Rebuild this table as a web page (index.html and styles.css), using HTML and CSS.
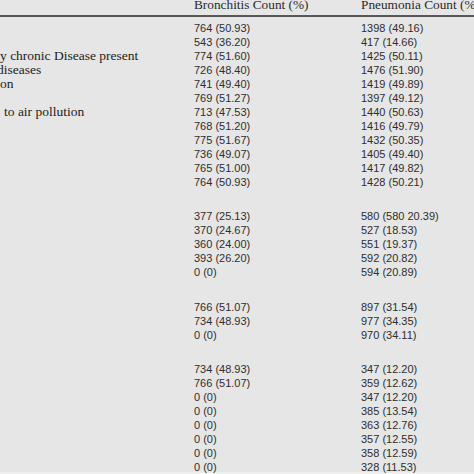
FILE: index.html
```html
<!DOCTYPE html>
<html>
<head>
<meta charset="utf-8">
<link rel="stylesheet" href="styles.css">
</head>
<body>
<div class="sheet">
  <div class="head">
    <div class="cell label"></div>
    <div class="cell col">Bronchitis Count (%)</div>
    <div class="cell col">Pneumonia Count (%)</div>
  </div>
  <div class="body">
    <div class="group g1">
      <div class="row"><div class="label"></div><div class="col">764 (50.93)</div><div class="col">1398 (49.16)</div></div>
      <div class="row"><div class="label"></div><div class="col">543 (36.20)</div><div class="col">417 (14.66)</div></div>
      <div class="row"><div class="label"><span class="lbl">y chronic Disease present</span></div><div class="col">774 (51.60)</div><div class="col">1425 (50.11)</div></div>
      <div class="row"><div class="label"><span class="lbl cut-d">diseases</span></div><div class="col">726 (48.40)</div><div class="col">1476 (51.90)</div></div>
      <div class="row"><div class="label"><span class="lbl">on</span></div><div class="col">741 (49.40)</div><div class="col">1419 (49.89)</div></div>
      <div class="row"><div class="label"></div><div class="col">769 (51.27)</div><div class="col">1397 (49.12)</div></div>
      <div class="row"><div class="label"><span class="lbl ind">to air pollution</span></div><div class="col">713 (47.53)</div><div class="col">1440 (50.63)</div></div>
      <div class="row"><div class="label"></div><div class="col">768 (51.20)</div><div class="col">1416 (49.79)</div></div>
      <div class="row"><div class="label"></div><div class="col">775 (51.67)</div><div class="col">1432 (50.35)</div></div>
      <div class="row"><div class="label"></div><div class="col">736 (49.07)</div><div class="col">1405 (49.40)</div></div>
      <div class="row"><div class="label"></div><div class="col">765 (51.00)</div><div class="col">1417 (49.82)</div></div>
      <div class="row"><div class="label"></div><div class="col">764 (50.93)</div><div class="col">1428 (50.21)</div></div>
    </div>
    <div class="group g2">
      <div class="row"><div class="label"></div><div class="col">377 (25.13)</div><div class="col">580 (580 20.39)</div></div>
      <div class="row"><div class="label"></div><div class="col">370 (24.67)</div><div class="col">527 (18.53)</div></div>
      <div class="row"><div class="label"></div><div class="col">360 (24.00)</div><div class="col">551 (19.37)</div></div>
      <div class="row"><div class="label"></div><div class="col">393 (26.20)</div><div class="col">592 (20.82)</div></div>
      <div class="row"><div class="label"></div><div class="col">0 (0)</div><div class="col">594 (20.89)</div></div>
    </div>
    <div class="group g3">
      <div class="row"><div class="label"></div><div class="col">766 (51.07)</div><div class="col">897 (31.54)</div></div>
      <div class="row"><div class="label"></div><div class="col">734 (48.93)</div><div class="col">977 (34.35)</div></div>
      <div class="row"><div class="label"></div><div class="col">0 (0)</div><div class="col">970 (34.11)</div></div>
    </div>
    <div class="group g4">
      <div class="row"><div class="label"></div><div class="col">734 (48.93)</div><div class="col">347 (12.20)</div></div>
      <div class="row"><div class="label"></div><div class="col">766 (51.07)</div><div class="col">359 (12.62)</div></div>
      <div class="row"><div class="label"></div><div class="col">0 (0)</div><div class="col">347 (12.20)</div></div>
      <div class="row"><div class="label"></div><div class="col">0 (0)</div><div class="col">385 (13.54)</div></div>
      <div class="row"><div class="label"></div><div class="col">0 (0)</div><div class="col">363 (12.76)</div></div>
      <div class="row"><div class="label"></div><div class="col">0 (0)</div><div class="col">357 (12.55)</div></div>
      <div class="row"><div class="label"></div><div class="col">0 (0)</div><div class="col">358 (12.59)</div></div>
      <div class="row"><div class="label"></div><div class="col">0 (0)</div><div class="col">328 (11.53)</div></div>
    </div>
  </div>
</div>
</body>
</html>
```

FILE: styles.css
```css
html, body {
  margin: 0;
  padding: 0;
  width: 474px;
  height: 474px;
  overflow: hidden;
  background: #efefef;
}

.sheet {
  height: 472px;
  background: #e6e6e6;
}

.head {
  display: flex;
  height: 15px;
  border-bottom: 2px solid #585858;
  font-family: "Liberation Serif", "DejaVu Serif", serif;
  font-size: 13.3px;
  line-height: 10px;
  color: #2a2a2a;
  white-space: nowrap;
}

.label {
  width: 194px;
  flex: none;
  overflow: hidden;
  white-space: nowrap;
}

.col {
  width: 167px;
  flex: none;
  white-space: nowrap;
}

.col:last-child {
  width: 113px;
  overflow: hidden;
}

.body {
  padding-top: 4px;
  display: flex;
  flex-direction: column;
}

.g2 {
  margin-top: 20px;
}

.g3 {
  margin-top: 21px;
}

.g4 {
  margin-top: 20px;
}

.row {
  display: flex;
  align-items: baseline;
  height: 14px;
  font-family: "Liberation Sans", Arial, sans-serif;
  font-size: 11px;
  line-height: 14px;
  color: #2e2e2e;
}

.lbl {
  display: inline-block;
  font-family: "Liberation Serif", "DejaVu Serif", serif;
  font-size: 13.5px;
  color: #222;
}

.cut-d {
  margin-left: -3px;
}

.ind {
  margin-left: 4px;
}
```
